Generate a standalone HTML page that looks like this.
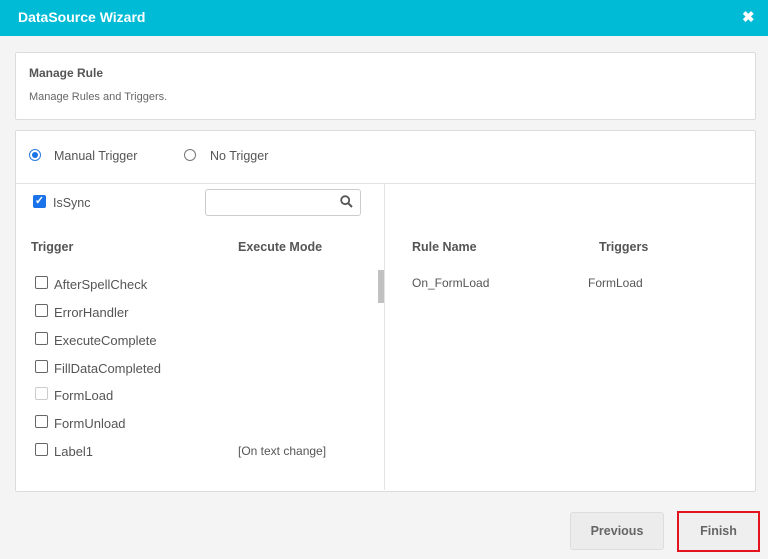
<!DOCTYPE html>
<html><head><style>
body{margin:0;width:768px;height:559px;background:#f4f4f4;font-family:"Liberation Sans",sans-serif;position:relative;overflow:hidden;color:#555}
.a{position:absolute}
.hdr{left:0;top:0;width:768px;height:36px;background:#00bbd6;color:#fff;font-weight:bold;font-size:14px}
.panel{background:#fff;border:1px solid #dcdcdc;border-radius:2px}
.t{font-size:12.5px;color:#555}
.cb{width:11px;height:11px;border:1px solid #666;border-radius:2px;background:#fff}
</style></head><body>
<div class="a hdr"><span class="a" style="left:18px;top:9px">DataSource Wizard</span><span class="a" style="left:742px;top:8px;font-size:15px">✖</span></div>
<div class="a panel" style="left:15px;top:52px;width:739px;height:66px"></div>
<div class="a" style="left:29px;top:66px;font-size:12px;font-weight:bold;color:#555">Manage Rule</div>
<div class="a" style="left:29px;top:91px;font-size:11px;color:#666">Manage Rules and Triggers.</div>
<div class="a panel" style="left:15px;top:130px;width:739px;height:360px"></div>
<div class="a" style="left:16px;top:183px;width:739px;height:1px;background:#e3e3e3"></div>
<div class="a" style="left:384px;top:184px;width:1px;height:306px;background:#e3e3e3"></div>
<div class="a" style="left:378px;top:270px;width:6px;height:33px;background:#c1c1c1"></div>
<div class="a" style="left:29px;top:149px;width:10px;height:10px;border:1px solid #2a7be0;border-radius:50%;background:#fff"><div class="a" style="left:2px;top:2px;width:6px;height:6px;border-radius:50%;background:#1a73e8"></div></div>
<div class="a t" style="left:54px;top:149px">Manual Trigger</div>
<div class="a" style="left:184px;top:149px;width:10px;height:10px;border:1px solid #777;border-radius:50%"></div>
<div class="a t" style="left:210px;top:149px">No Trigger</div>
<div class="a" style="left:33px;top:195px;width:13px;height:13px;background:#1a73e8;border-radius:2px;color:#fff;font-size:11px;line-height:13px;text-align:center;font-weight:bold">✓</div>
<div class="a t" style="left:53px;top:196px">IsSync</div>
<div class="a" style="left:205px;top:189px;width:154px;height:25px;border:1px solid #ccc;border-radius:3px;background:#fff"></div>
<svg class="a" style="left:340px;top:195px" width="13" height="13" viewBox="0 0 13 13"><circle cx="5.2" cy="5.2" r="4" fill="none" stroke="#555" stroke-width="1.8"/><path d="M8.2 8.2L12 12" stroke="#555" stroke-width="2"/></svg>
<div class="a t" style="left:31px;top:240px;font-weight:bold">Trigger</div>
<div class="a t" style="left:238px;top:240px;font-weight:bold">Execute Mode</div>
<div class="a t" style="left:412px;top:240px;font-weight:bold">Rule Name</div>
<div class="a t" style="left:599px;top:240px;font-weight:bold">Triggers</div>
<div class="a t" style="left:412px;top:276px;font-size:12px">On_FormLoad</div>
<div class="a t" style="left:588px;top:276px;font-size:12px">FormLoad</div>
<div class="a cb" style="left:35px;top:276px"></div><div class="a t" style="left:54px;top:277px;font-size:13px">AfterSpellCheck</div>
<div class="a cb" style="left:35px;top:304px"></div><div class="a t" style="left:54px;top:305px;font-size:13px">ErrorHandler</div>
<div class="a cb" style="left:35px;top:332px"></div><div class="a t" style="left:54px;top:333px;font-size:13px">ExecuteComplete</div>
<div class="a cb" style="left:35px;top:360px"></div><div class="a t" style="left:54px;top:361px;font-size:13px">FillDataCompleted</div>
<div class="a cb" style="left:35px;top:387px;border-color:#ccc"></div><div class="a t" style="left:54px;top:388px;font-size:13px">FormLoad</div>
<div class="a cb" style="left:35px;top:415px"></div><div class="a t" style="left:54px;top:416px;font-size:13px">FormUnload</div>
<div class="a cb" style="left:35px;top:443px"></div><div class="a t" style="left:54px;top:444px;font-size:13px">Label1</div>
<div class="a t" style="left:238px;top:444px;font-size:12px">[On text change]</div>
<div class="a" style="left:570px;top:512px;width:92px;height:36px;border:1px solid #ddd;border-radius:3px;background:#ececec;font-size:12.5px;font-weight:bold;color:#666;text-align:center;line-height:36px">Previous</div>
<div class="a" style="left:677px;top:511px;width:79px;height:37px;border:2px solid #e3141e;background:#efefef;font-size:12.5px;font-weight:bold;color:#666;text-align:center;line-height:37px">Finish</div>
</body></html>
